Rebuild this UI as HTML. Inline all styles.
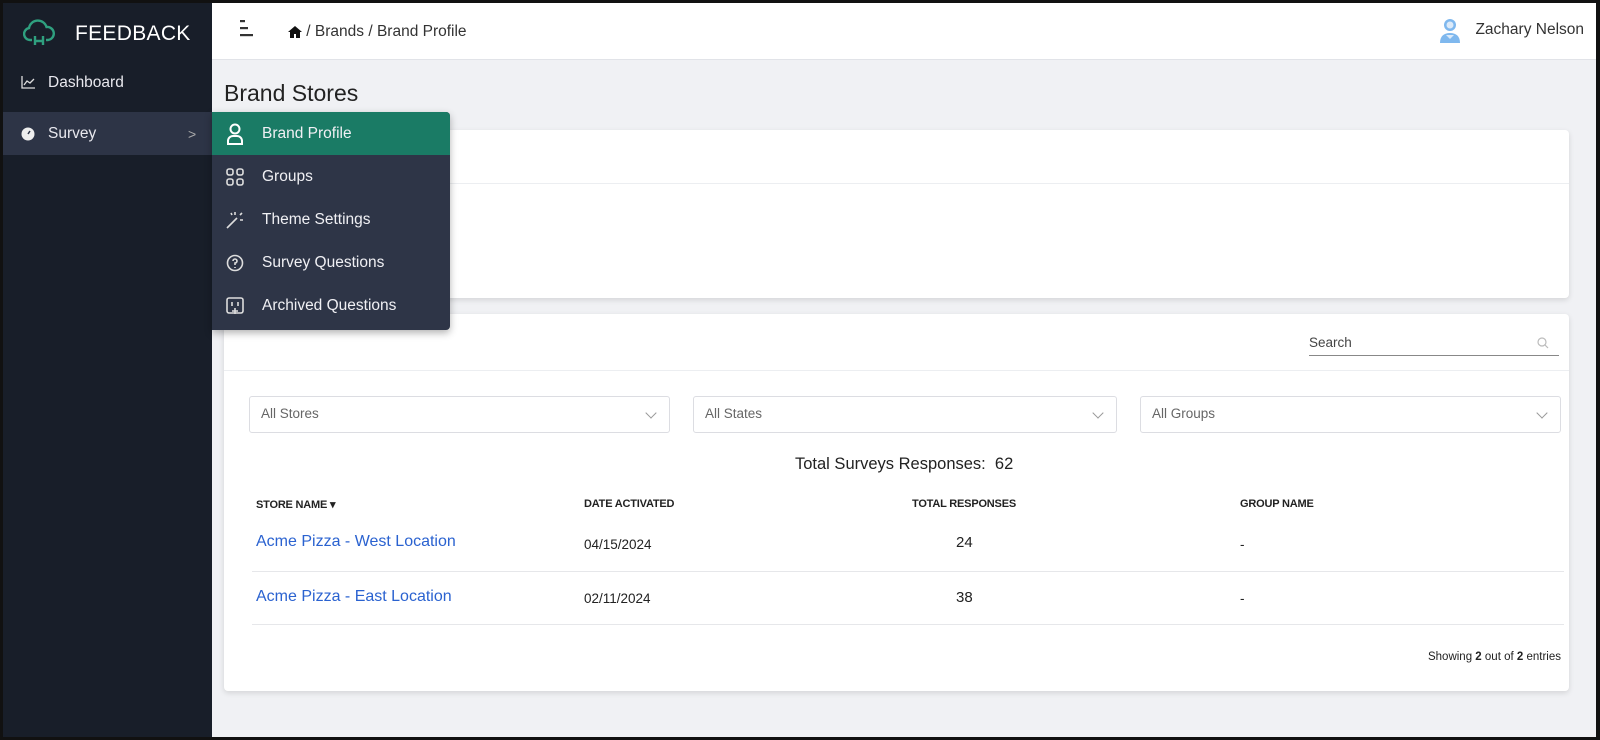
<!DOCTYPE html>
<html><head><meta charset="utf-8"><style>
*{box-sizing:border-box;margin:0;padding:0}
body{width:1600px;height:740px;overflow:hidden;background:#111;font-family:"Liberation Sans",Arial,sans-serif;position:relative}
.frame{position:absolute;left:3px;top:3px;width:1593px;height:734px;background:#f0f1f4;overflow:hidden}
.side{position:absolute;left:0;top:0;width:209px;height:734px;background:#181e29}
.logo{position:absolute;left:20px;top:16px;display:flex;align-items:center;color:#fff;font-size:21px;letter-spacing:.3px}
.logo span{margin-left:20px}
.nav{position:absolute;left:0;width:209px;height:43px;display:flex;align-items:center;color:#e8e8ee;font-size:15.5px}
.nav svg{margin-left:18px;margin-right:13px}
.head{position:absolute;left:209px;top:0;right:0;height:57px;background:#fff;border-bottom:1px solid #e1e3e8}
.crumb{position:absolute;left:76px;top:20px;font-size:15.5px;color:#333;display:flex;align-items:center}
.user{position:absolute;right:12px;top:14px;display:flex;align-items:center;font-size:15.5px;color:#333}
.title{position:absolute;left:221px;top:77px;font-size:23px;color:#222}
.card{position:absolute;background:#fff;border-radius:4px;box-shadow:0 2px 6px rgba(0,0,0,.12)}
.menu{position:absolute;left:209px;top:109px;width:238px;height:218px;background:#2e3547;border-radius:0 4px 4px 0;box-shadow:0 3px 8px rgba(0,0,0,.3);z-index:5}
.mi{height:43px;display:flex;align-items:center;color:#f0f0f4;font-size:15.5px}
.mi svg{margin-left:14px;margin-right:18px}
.mi.act{background:#1a7b65;border-radius:0 4px 0 0}
.sel{position:absolute;top:393px;height:37px;border:1px solid #dcdde2;border-radius:3px;font-size:13.5px;color:#666;padding:9px 11px}
.sel:after{content:"";position:absolute;right:14px;top:12px;width:7px;height:7px;border-right:1px solid #999;border-bottom:1px solid #999;transform:rotate(45deg)}
.th{position:absolute;top:495px;font-size:11px;font-weight:bold;color:#222;letter-spacing:-.2px}
.td{position:absolute;font-size:13.5px;color:#222}
.lnk{position:absolute;font-size:16px;color:#2a62d0}
.num{position:absolute;font-size:15px;color:#222}
.hr{position:absolute;left:249px;width:1312px;height:1px;background:#e6e7ea}
</style></head><body><div class="frame">
<div class="side">
 <div class="logo"><svg width="32" height="30" viewBox="0 0 32 30" fill="none" stroke="#2fa07f" stroke-width="2.4"><path d="M9 21H7a6 6 0 0 1-1-11.9A9 9 0 0 1 23.5 8 6.5 6.5 0 0 1 25 21h-2"/><path d="M12 17v9M20 17v9M12 22h8"/></svg><span>FEEDBACK</span></div>
 <div class="nav" style="top:58px"><svg width="14" height="13" viewBox="0 0 14 13" fill="none" stroke="#ddd" stroke-width="1.3"><path d="M1 0v12h13"/><path d="M3 9l3-4 3 2 4-4"/></svg>Dashboard</div>
 <div class="nav" style="top:109px;background:#2d3446"><svg width="14" height="14" viewBox="0 0 14 14"><circle cx="7" cy="7" r="6.5" fill="#eee"/><path d="M7 7l2-3" stroke="#2d3446" stroke-width="1.5"/></svg>Survey<span style="position:absolute;left:185px;color:#aaa;font-size:14px">&gt;</span></div>
</div>
<div class="head">
 <svg style="position:absolute;left:27px;top:16px" width="16" height="20" viewBox="0 0 16 20" fill="#333"><rect x="1" y="1" width="5" height="2.2"/><rect x="1" y="8" width="8" height="2.2"/><rect x="1" y="15" width="13" height="2.2"/></svg>
 <div class="crumb"><svg width="14" height="12" viewBox="0 0 14 12" fill="#111"><path d="M7 0L0 6h2v6h4V8h2v4h4V6h2z"/></svg>&nbsp;/ Brands / Brand Profile</div>
 <div class="user"><svg width="24" height="26" viewBox="0 0 24 26" fill="#7fb8ee"><circle cx="12" cy="8" r="6"/><circle cx="12" cy="8" r="3.5" fill="#dceaf9"/><path d="M2 26c0-7 4-10 10-10s10 3 10 10z"/><path d="M8 18l4 4 4-4z" fill="#dceaf9"/></svg><span style="margin-left:13px">Zachary Nelson</span></div>
</div>
<div class="title">Brand Stores</div>
<div class="card" style="left:221px;top:127px;width:1345px;height:168px"><div style="position:absolute;left:0;right:0;top:53px;height:1px;background:#eceef1"></div></div>
<div class="menu">
 <div class="mi act"><svg width="18" height="22" viewBox="0 0 18 22" fill="none" stroke="#fff" stroke-width="2"><circle cx="9" cy="6" r="4.5"/><path d="M2 21v-3a5 5 0 0 1 5-5h4a5 5 0 0 1 5 5v3z"/></svg>Brand Profile</div>
 <div class="mi"><svg width="18" height="18" viewBox="0 0 18 18" fill="none" stroke="#ddd" stroke-width="1.6"><rect x="1" y="1" width="6" height="6" rx="2"/><rect x="11" y="1" width="6" height="6" rx="2"/><rect x="1" y="11" width="6" height="6" rx="2"/><rect x="11" y="11" width="6" height="6" rx="2"/></svg>Groups</div>
 <div class="mi"><svg width="18" height="18" viewBox="0 0 18 18" fill="none" stroke="#ddd" stroke-width="1.6"><path d="M1 17L11 7"/><path d="M9 1v3M14 4l2-2M14 9h3M6 4L5 2"/></svg>Theme Settings</div>
 <div class="mi"><svg width="18" height="18" viewBox="0 0 18 18" fill="none" stroke="#ddd" stroke-width="1.6"><circle cx="9" cy="9" r="7.5"/><path d="M7 7a2 2 0 1 1 2 2v2M9 13v1"/></svg>Survey Questions</div>
 <div class="mi"><svg width="18" height="18" viewBox="0 0 18 18" fill="none" stroke="#ddd" stroke-width="1.6"><rect x="1" y="1" width="16" height="15" rx="2"/><path d="M6 5v4M12 5v4M9 11v6M6 14h6"/></svg>Archived Questions</div>
</div>
<div class="card" style="left:221px;top:311px;width:1345px;height:377px">
 <div style="position:absolute;left:1085px;top:17px;width:250px;height:25px;border-bottom:1px solid #888;font-size:13.5px;color:#444;padding-top:4px">Search<svg style="position:absolute;right:10px;top:6px" width="12" height="12" viewBox="0 0 12 12" fill="none" stroke="#bbb" stroke-width="1.2"><circle cx="5" cy="5" r="4"/><path d="M8 8l3 3"/></svg></div>
 <div style="position:absolute;left:0;right:0;top:56px;height:1px;background:#eceef1"></div>
</div>
<div class="sel" style="left:246px;width:421px">All Stores</div>
<div class="sel" style="left:690px;width:424px">All States</div>
<div class="sel" style="left:1137px;width:421px">All Groups</div>
<div class="td" style="left:792px;top:452px;font-size:16.5px">Total Surveys Responses: &nbsp;62</div>
<div class="th" style="left:253px">STORE NAME ▾</div>
<div class="th" style="left:581px">DATE ACTIVATED</div>
<div class="th" style="left:909px">TOTAL RESPONSES</div>
<div class="th" style="left:1237px">GROUP NAME</div>
<div class="lnk" style="left:253px;top:530px">Acme Pizza - West Location</div>
<div class="td" style="left:581px;top:534px">04/15/2024</div>
<div class="num" style="left:953px;top:531px">24</div>
<div class="td" style="left:1237px;top:534px">-</div>
<div class="hr" style="top:568px"></div>
<div class="lnk" style="left:253px;top:585px">Acme Pizza - East Location</div>
<div class="td" style="left:581px;top:588px">02/11/2024</div>
<div class="num" style="left:953px;top:586px">38</div>
<div class="td" style="left:1237px;top:588px">-</div>
<div class="hr" style="top:621px"></div>
<div class="td" style="right:35px;top:648px;font-size:11.5px">Showing <b>2</b> out of <b>2</b> entries</div>
</div></body></html>
